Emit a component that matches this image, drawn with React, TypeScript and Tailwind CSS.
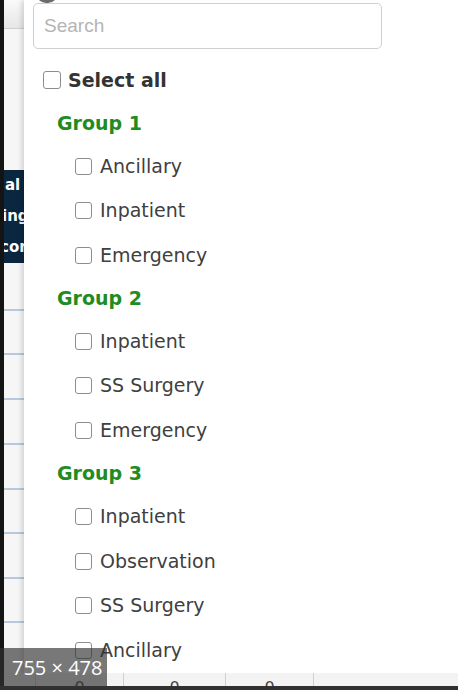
import React from "react";

function Box({ size = 17 }: { size?: number }) {
  return (
    <span
      className="inline-block shrink-0 rounded-[3px] border border-[#8d8d8d] bg-white"
      style={{ width: size, height: size }}
    />
  );
}

type Row =
  | { kind: "group"; label: string; h: number }
  | { kind: "item"; label: string; h: number };

const rows: Row[] = [
  { kind: "group", label: "Group 1", h: 42 },
  { kind: "item", label: "Ancillary", h: 44 },
  { kind: "item", label: "Inpatient", h: 45 },
  { kind: "item", label: "Emergency", h: 45 },
  { kind: "group", label: "Group 2", h: 41 },
  { kind: "item", label: "Inpatient", h: 44 },
  { kind: "item", label: "SS Surgery", h: 45 },
  { kind: "item", label: "Emergency", h: 45 },
  { kind: "group", label: "Group 3", h: 41 },
  { kind: "item", label: "Inpatient", h: 45 },
  { kind: "item", label: "Observation", h: 44 },
  { kind: "item", label: "SS Surgery", h: 45 },
  { kind: "item", label: "Ancillary", h: 45 },
];

export default function App() {
  const lineYs = [309, 353, 398, 443, 488, 532, 577, 621];
  return (
    <div
      className="relative flex h-[690px] w-[458px] flex-col overflow-hidden bg-white"
      style={{ fontFamily: '"DejaVu Sans", sans-serif' }}
    >
      <div className="flex h-[673px] w-full">
        <div className="w-[4px] shrink-0 bg-[#141414]" />
        {/* left table strip */}
        <div className="relative w-[20px] shrink-0 overflow-hidden bg-[#f6f6f7]">
          <div className="h-[29px] border-b border-[#cfcfcf] bg-gradient-to-b from-[#fafafa] to-[#e6e6e6]" />
          <div className="mt-[141px] flex h-[93px] flex-col justify-center gap-[8px] bg-[#0b2740] text-[15px] font-bold leading-[23px] text-white">
            <div className="ml-[1px]">al</div>
            <div className="ml-[-2px]">ing</div>
            <div className="ml-[-4px]">cor</div>
          </div>
          {lineYs.map((y) => (
            <div
              key={y}
              className="absolute left-0 h-[2px] w-full bg-[#b9c9dc]"
              style={{ top: y }}
            />
          ))}
        </div>
        {/* dropdown panel */}
        <div className="relative flex-1 bg-white shadow-[-3px_0_4px_rgba(0,0,0,0.12)]">
          <div className="absolute left-[12px] top-[-17px] h-[20px] w-[22px] rounded-full bg-[#6b6b6b]" />
          <div className="pl-[9px] pt-[3px]">
            <div
              className="flex h-[46px] w-[349px] items-center rounded-[5px] border border-[#cfcfcf] pl-[10px] text-[19px] text-[#b4b4b4]"
              style={{ fontFamily: '"Liberation Sans", Arial, sans-serif' }}
            >
              Search
            </div>
          </div>
          <div className="mt-[9px] flex h-[44px] items-center gap-[7px] pl-[19px] text-[19px] font-bold text-[#333]">
            <Box size={18} />
            <span>Select all</span>
          </div>
          {rows.map((r, i) =>
            r.kind === "group" ? (
              <div
                key={i}
                className="flex items-center pl-[33px] text-[19px] font-bold text-[#1f8c1f]"
                style={{ height: r.h }}
              >
                {r.label}
              </div>
            ) : (
              <div
                key={i}
                className="flex items-center gap-[8px] pl-[51px] text-[19px] text-[#404040]"
                style={{ height: r.h }}
              >
                <Box />
                <span>{r.label}</span>
              </div>
            )
          )}
        </div>
      </div>
      {/* bottom table row */}
      <div className="relative flex h-[13px] w-full overflow-hidden bg-[#f3f3f3]">
        <div className="w-[4px] shrink-0 bg-[#141414]" />
        <div className="w-[32px] border-r border-[#c5d2e2]" />
        <div className="w-[88px] border-r border-[#c5d2e2] pt-[7px] text-center text-[16px] leading-[16px] text-[#444]">0</div>
        <div className="w-[102px] border-r border-[#c5d2e2] pt-[7px] text-center text-[16px] leading-[16px] text-[#444]">0</div>
        <div className="w-[88px] border-r border-[#c5d2e2] pt-[7px] text-center text-[16px] leading-[16px] text-[#444]">0</div>
        <div className="flex-1" />
      </div>
      <div className="h-[4px] w-full bg-[#303030]" />
      {/* size badge overlay */}
      <div
        className="absolute bottom-[2px] left-0 flex h-[40px] w-[107px] items-center pl-[12px] text-[20px] text-white bg-[rgba(50,50,50,0.66)]"
        style={{ fontFamily: '"Open Sans", "DejaVu Sans", sans-serif' }}
      >
        755 × 478
      </div>
    </div>
  );
}
